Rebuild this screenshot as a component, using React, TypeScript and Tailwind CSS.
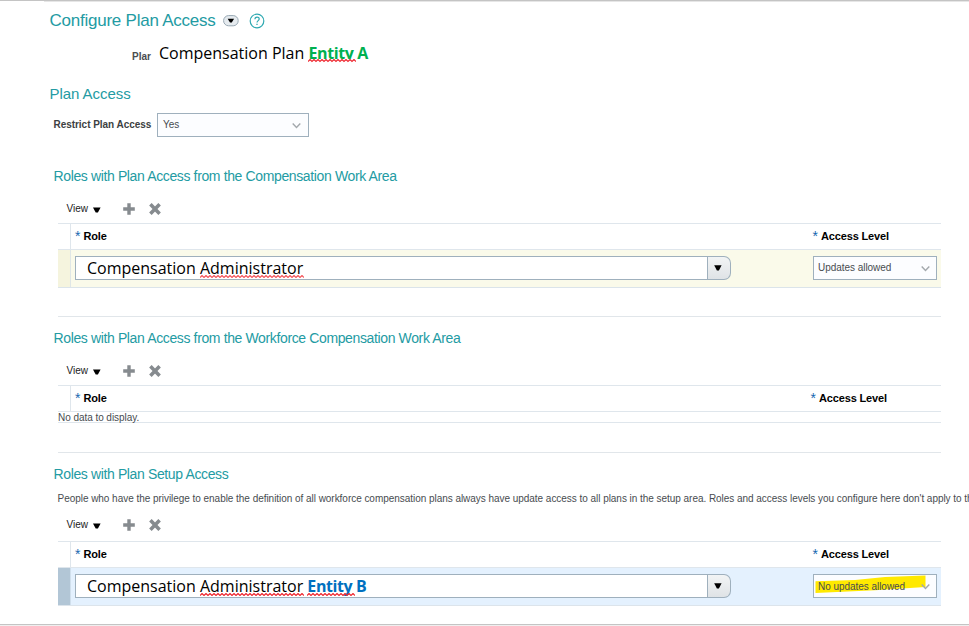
import type { ReactNode } from "react";

const zigzag = (width: number) => {
  let d = "M0 2.5";
  for (let x = 2, up = true; x <= width; x += 2, up = !up) d += ` L${x} ${up ? 0.5 : 2.5}`;
  return d;
};

function Misspelled({ children, width, top, soft = false, cover = false }: { children: ReactNode; width: number; top: number; soft?: boolean; cover?: boolean }) {
  return (
    <span className="relative inline-block">
      {children}
      <svg
        className={`absolute left-0 ${cover ? "bg-white" : ""}`}
        style={{ top }}
        width={width}
        height={cover ? 5 : 3}
        viewBox={`0 0 ${width} ${cover ? 5 : 3}`}
      >
        <path d={zigzag(width)} fill="none" stroke={soft ? "#f4595e" : "#ee2b33"} strokeWidth="1.2" />
      </svg>
    </span>
  );
}

function Chevron() {
  return (
    <svg width="9" height="6" viewBox="0 0 9 6" className="relative top-px">
      <path d="M0.7 0.6 L4.5 4.5 L8.3 0.6" fill="none" stroke="#a3a8ac" strokeWidth="1.4" />
    </svg>
  );
}

function SectionTitle({ children }: { children: ReactNode }) {
  return <h2 className="h-5 pl-[53.5px] text-[14px] leading-[21px] tracking-[-0.37px] text-[#239ba3]">{children}</h2>;
}

function Toolbar() {
  return (
    <div className="flex h-5 items-center pl-[66.5px]">
      <span className="w-[26px] pt-[2px] text-[10px] leading-5 text-[#222]">View</span>
      <svg width="8" height="6" viewBox="0 0 8 6" className="mt-[3px]">
        <path d="M0 0.4 H7.6 L4.9 5.4 H2.7 Z" fill="#000" />
      </svg>
      <svg width="12" height="12" viewBox="0 0 12 12" className="mt-px ml-[22px]">
        <path d="M4.3 0.3 H7.7 V4.3 H11.8 V7.7 H7.7 V11.7 H4.3 V7.7 H0.2 V4.3 H4.3 Z" fill="#868b8f" />
      </svg>
      <svg width="12" height="12" viewBox="0 0 12 12" className="mt-px ml-[14.5px]">
        <path d="M1.4 1.2 L10.6 10.8 M10.6 1.2 L1.4 10.8" fill="none" stroke="#868b8f" strokeWidth="3.5" />
      </svg>
    </div>
  );
}

function ColumnLabel({ children }: { children: ReactNode }) {
  return (
    <span className="flex h-6 items-center text-[11px] leading-6 font-bold tracking-[-0.15px] text-black">
      <span className="mt-[-1px] w-[8.5px] text-[14px] leading-6 font-normal text-[#1668b0]">*</span>
      {children}
    </span>
  );
}

function TableHeader({ shift = false }: { shift?: boolean }) {
  return (
    <div className="flex h-[27px] border-y border-[#dfe6ec]">
      <div className="w-[13px] border-r border-[#dfe6ec]" />
      <div className={`pl-1 ${shift ? "w-[739.5px]" : "w-[741.5px]"}`}>
        <ColumnLabel>Role</ColumnLabel>
      </div>
      <ColumnLabel>Access Level</ColumnLabel>
    </div>
  );
}

function RoleRow({ selected = false, role, level }: { selected?: boolean; role: ReactNode; level: string }) {
  return (
    <div className={`flex h-[38px] border-b ${selected ? "border-[#dce4eb] bg-[#e4f1fe]" : "border-[#dbe4ea] bg-[#fafaea]"}`}>
      <div className={`w-[13px] border-r ${selected ? "border-[#d0dfec] bg-[#b2c6d6]" : "border-[#dfe6e6] bg-[#f5f4de]"}`} />
      <div className="flex w-[742px] items-start pt-[6px] pl-1">
        <div className="h-6 w-[633px] border border-[#9fb0bd] bg-white pl-[11px] font-['Open_Sans','Noto_Sans',sans-serif] text-[16px] leading-[23px] whitespace-pre text-black">
          {role}
        </div>
        <div className="flex h-6 w-[23px] items-center justify-center rounded-r-[7px] border border-l-0 border-[#9fb0bd] bg-gradient-to-b from-[#f2f4f5] to-[#dfe3e6] pr-[2px]">
          <svg width="8" height="6" viewBox="0 0 8 6">
            <path d="M0.2 0.2 H7.6 L4.9 5.6 H2.9 Z" fill="#000" />
          </svg>
        </div>
      </div>
      <div className="relative mt-[6px] flex h-6 w-[124px] items-center justify-between border border-[#9fb0bd] bg-[#fcfdff] pr-[6px] pl-1">
        {selected && (
          <svg className="absolute top-0 left-px" width="112" height="20" viewBox="0 0 112 20">
            <path d="M0.5 6.2 L40 5 L70 2 L110.5 0.6 V12 L60 15.2 L0.5 18 Z" fill="#ffe900" />
          </svg>
        )}
        <span className={`relative text-[10px] leading-[21px] tracking-[-0.04px] text-[#484c50] ${selected ? "" : "-top-px"}`}>{level}</span>
        <Chevron />
      </div>
    </div>
  );
}

export default function App() {
  return (
    <main className="h-[626px] w-[969px] overflow-hidden bg-white font-['Liberation_Sans',Arial,sans-serif] whitespace-nowrap">
      <div className="h-px bg-[#c4c4c4]" />
      <div className="ml-11 h-px bg-[#e6e6e6]" />

      <header className="mt-[7px] flex h-[23px] items-start pl-[49.5px]">
        <h1 className="w-[173.5px] text-[17px] leading-[23px] tracking-[-0.24px] text-[#239ba3]">Configure Plan Access</h1>
        <svg width="16" height="12" viewBox="0 0 16 12" className="mt-[6px]">
          <rect x="0.6" y="0.6" width="14.6" height="10.2" rx="5" fill="#e6ebef" stroke="#98a8b3" />
          <path d="M4.7 3.8 H11.1 L8.8 7.6 H7 Z" fill="#000" />
        </svg>
        <svg width="16" height="16" viewBox="0 0 16 16" className="mt-[4px] ml-[10px]">
          <circle cx="8" cy="8" r="6.8" fill="none" stroke="#2fa9b1" strokeWidth="1.2" />
          <path d="M5.9 6.2 C5.9 3.5 10.2 3.5 10.2 6 C10.2 7.6 8 7.7 8 9.6" fill="none" stroke="#2fa9b1" strokeWidth="1.2" />
          <path d="M8 10.8 V12.1" stroke="#2fa9b1" strokeWidth="1.3" />
        </svg>
      </header>

      <div className="mt-[9px] flex h-[24px] pl-[132px]">
        <span className="w-[27px] pt-[4px] text-[10px] leading-6 font-bold text-[#4a4d50]">Plar</span>
        <span className="font-['Open_Sans','Noto_Sans',sans-serif] text-[16px] leading-[24px] text-black">
          Compensation Plan{" "}
          <b className="tracking-[-0.4px] text-[#00b050]">
            <Misspelled width={48} top={18} cover>
              Entity
            </Misspelled>{" "}
            A
          </b>
        </span>
      </div>

      <h2 className="mt-[19px] h-5 pl-[49.5px] text-[15px] leading-[20px] tracking-[-0.05px] text-[#239ba3]">Plan Access</h2>

      <div className="mt-[9px] flex h-6 items-center pl-[53.5px]">
        <label className="w-[103.5px] text-[10px] leading-[22px] font-bold tracking-[-0.04px] text-[#3c3f42]">Restrict Plan Access</label>
        <div className="flex h-6 w-[152px] items-center justify-between border border-[#9fb0bd] bg-[#fcfdff] pr-[7px] pl-[5px] text-[10px] leading-[22px] text-[#484c50]">
          Yes
          <Chevron />
        </div>
      </div>

      <section className="mt-[29px] h-[151px]">
        <SectionTitle>Roles with Plan Access from the Compensation Work Area</SectionTitle>
        <div className="h-[12px]" />
        <Toolbar />
        <div className="mt-[5px] ml-[58px] w-[883.4px]">
          <TableHeader />
          <RoleRow
            level="Updates allowed"
            role={
              <>
                Compensation <Misspelled width={104} top={18} soft>Administrator</Misspelled>
              </>
            }
          />
          <div className="mt-7 h-px bg-[#e1e6ea]" />
        </div>
      </section>

      <section className="mt-[11px] h-[125px]">
        <SectionTitle>Roles with Plan Access from the Workforce Compensation Work Area</SectionTitle>
        <div className="h-[12px]" />
        <Toolbar />
        <div className="mt-[5px] ml-[58px] w-[883.4px]">
          <TableHeader shift />
          <p className="h-[11px] border-b border-[#dfe6ec] text-[10px] leading-[11px] tracking-[-0.05px] text-[#484c50]">No data to display.</p>
          <div className="mt-[29px] h-px bg-[#e1e6ea]" />
        </div>
      </section>

      <section className="mt-[11px]">
        <SectionTitle>Roles with Plan Setup Access</SectionTitle>
        <p className="mt-[5px] h-5 pl-[57.5px] text-[10px] leading-5 tracking-[-0.038px] text-[#484c50]">
          People who have the privilege to enable the definition of all workforce compensation plans always have update access to all plans in the setup area. Roles and access levels you configure here don't apply to th
        </p>
        <div className="h-[5px]" />
        <Toolbar />
        <div className="mt-[7px] ml-[58px] w-[883.4px]">
          <TableHeader />
          <RoleRow
            selected
            level="No updates allowed"
            role={
              <>
                Compensation <Misspelled width={104} top={18}>Administrator</Misspelled>{" "}
                <b className="tracking-[-0.4px] text-[#0070c0]">
                  <Misspelled width={48} top={18}>Entity</Misspelled> B
                </b>
              </>
            }
          />
        </div>
      </section>
      <div className="mt-[18px] h-px bg-[#c4c4c4]" />
      <div className="h-px bg-[#efefef]" />
    </main>
  );
}
